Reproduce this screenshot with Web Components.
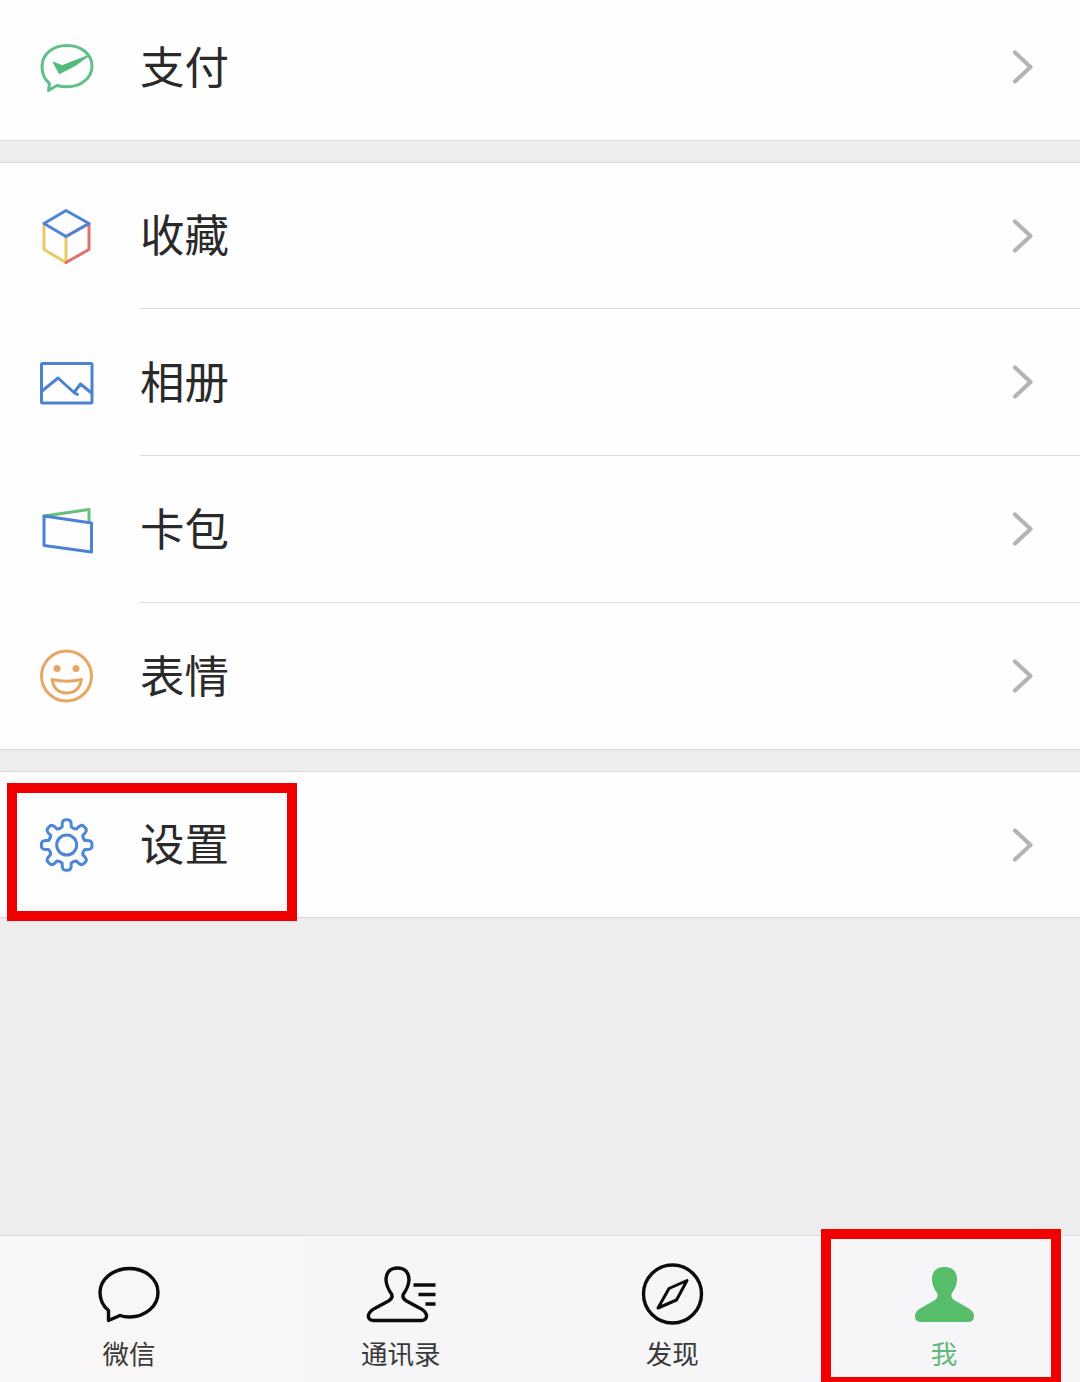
<!DOCTYPE html>
<html lang="zh-CN">
<head>
<meta charset="utf-8">
<title>我</title>
<style>
html,body{margin:0;padding:0}
body{width:1080px;height:1382px;overflow:hidden;position:relative;background:#eeedee;font-family:"Noto Sans CJK SC","Noto Sans",sans-serif;display:flex;flex-direction:column}
</style>
</head>
<body>
<template id="t-group"><style>
:host{display:block;background:#fefefe;border-top:1px solid #d9d9db;border-bottom:1px solid #d9d9db;margin-bottom:21px}
:host([first]){border-top:0;margin-top:-6px}
:host([last]){margin-bottom:0}
</style><slot></slot></template>

<template id="t-row"><style>
:host{display:flex;align-items:stretch;height:var(--h,147px);box-sizing:border-box;padding-left:33px}
.ic{width:66px;flex:none;display:flex;align-items:center;justify-content:center}
.body{flex:1;margin-left:41px;display:flex;align-items:center;justify-content:space-between;padding-right:44px;border-bottom:1px solid #dcdcdc}
:host([end]) .body{border-bottom:0}
.t{font-size:44.5px;line-height:60px;color:#2a2a2a;margin-top:-5px}
svg{display:block}
</style><div class="ic"><slot name="icon"></slot></div><div class="body"><span class="t"><slot></slot></span>
<svg width="26" height="36" viewBox="0 0 26 36" fill="none" stroke="#b4b4b4" stroke-width="4.2" stroke-linecap="round" stroke-linejoin="round"><path d="M5 3.500 L20.500 18 L5 32.500"/></svg></div></template>

<template id="t-tabbar"><style>
:host{display:grid;grid-template-columns:repeat(4,100px);column-gap:171.67px;padding-left:79px;height:147px;box-sizing:border-box;margin-top:auto;border-top:1px solid #dcdcdc;background:linear-gradient(90deg,#f8f7f5 0,#f8f7f5 305px,#f6f5f7 305px)}
</style><slot></slot></template>

<template id="t-tab"><style>
:host{display:flex;flex-direction:column;align-items:center;padding-top:26px;color:#3a3a3a}
:host([active]){color:#62b87c}
.l{font-size:26.5px;line-height:30px;margin-top:12px}
::slotted(svg){display:block}
</style><slot name="icon"></slot><span class="l"><slot></slot></span></template>

<template id="t-mark"><style>
:host{display:block;position:absolute;box-sizing:border-box;border:10.5px solid #f20000}
</style></template>

<script>
function def(name, tpl){
  customElements.define(name, class extends HTMLElement{
    constructor(){super();this.attachShadow({mode:'open'}).appendChild(document.getElementById(tpl).content.cloneNode(true));}
  });
}
def('wx-group','t-group');def('wx-row','t-row');def('wx-tabbar','t-tabbar');def('wx-tab','t-tab');def('wx-mark','t-mark');
customElements.define('wx-gear',class extends HTMLElement{
  constructor(){super();
    const cx=33.7,cy=33,ro=24.2,ri=18.2;let d='';
    const p=(r,a)=>(cx+r*Math.sin(a)).toFixed(2)+' '+(cy-r*Math.cos(a)).toFixed(2);
    for(let i=0;i<8;i++){
      const a=i*Math.PI/4;
      d+=(i?'Q '+p(ri-1,a-Math.PI/8)+' ':'M ')+p(ri+.6,a-.24)+' Q '+p(ro+2.4,a-.2)+' '+p(ro+1,a)+' Q '+p(ro+2.4,a+.2)+' '+p(ri+.6,a+.24)+' ';
    }
    d+='Q '+p(ri-1,-Math.PI/8)+' '+p(ri+.6,-.24)+' Z';
    this.attachShadow({mode:'open'}).innerHTML='<style>:host{display:block;width:66px;height:66px}svg{display:block}</style><svg width="66" height="66" viewBox="0 0 66 66" fill="none" stroke="#4d86d6" stroke-width="3" stroke-linejoin="round"><path d="'+d+'"/><circle cx="33.7" cy="33" r="10"/></svg>';
  }
});
</script>

<wx-group first>
  <wx-row end style="--h:146px">
    <svg slot="icon" width="66" height="66" viewBox="33 34 66 66" fill="none">
      <path d="M57 85.500 C54 87 51 89 48.500 90.500 L49.500 83.500 C44.500 79.500 42 74 42 66.500 C42 54 53 45.500 67 45.500 C81 45.500 92 54 92 66 C92 78 81 86.800 67 86.800 C63.500 86.800 60 86.500 57 85.500 Z" stroke="#5fc08a" stroke-width="3" stroke-linejoin="round"/>
      <path d="M53.500 62.500 L62 66 L88 56 L75 65.500 L59.500 73.500 Z" fill="#55bb78" stroke="#55bb78" stroke-width="1.400" stroke-linejoin="round"/>
    </svg>
    支付
  </wx-row>
</wx-group>

<wx-group>
  <wx-row style="--h:146px">
    <svg slot="icon" width="66" height="66" viewBox="33 202.500 66 66" fill="none" stroke-width="3" stroke-linecap="round" stroke-linejoin="round">
      <path d="M66 236 V262 L44 249 V223" stroke="#ecc865"/>
      <path d="M66 236 L89 223 V249 L66 262" stroke="#e0716f"/>
      <path d="M44 223 L66 210 L89 223 L66 236 Z" stroke="#4d86d6"/>
    </svg>
    收藏
  </wx-row>
  <wx-row>
    <svg slot="icon" width="66" height="66" viewBox="33 349 66 66" fill="none" stroke="#4d82d2" stroke-width="3" stroke-linejoin="round" stroke-linecap="round">
      <rect x="41.500" y="362.500" width="50.500" height="39.500" rx="1"/>
      <path d="M42 390 L58 377 L74 391.500 L80.500 383 L91.500 392 M74 391.500 L77.500 393.500"/>
    </svg>
    相册
  </wx-row>
  <wx-row>
    <svg slot="icon" width="66" height="66" viewBox="33 496 66 66" fill="none" stroke-width="3" stroke-linejoin="round" stroke-linecap="round">
      <path d="M44 515 L89 508.500 V520" stroke="#66c07c"/>
      <path d="M44 515 L91.500 522 V551 L44 544.500 Z" stroke="#4d82d2"/>
    </svg>
    卡包
  </wx-row>
  <wx-row end style="--h:146px">
    <svg slot="icon" width="66" height="66" viewBox="33 643 66 66" fill="none" stroke="#e6a765" stroke-width="3" stroke-linejoin="round">
      <circle cx="66.500" cy="676" r="25"/>
      <circle cx="57" cy="668.500" r="3.500" fill="#e6a765" stroke="none"/>
      <circle cx="76" cy="668.500" r="3.500" fill="#e6a765" stroke="none"/>
      <path d="M52 679.500 Q66.500 683 81.500 679.500 Q79 693 66.500 693 Q54.500 693 52 679.500 Z"/>
    </svg>
    表情
  </wx-row>
</wx-group>

<wx-group last>
  <wx-row end style="--h:145px"><wx-gear slot="icon"></wx-gear>设置</wx-row>
</wx-group>

<wx-tabbar>
  <wx-tab>
    <svg slot="icon" width="100" height="64" viewBox="79.500 1262 100 64" fill="none" stroke="#0c0c0c" stroke-width="3.400" stroke-linejoin="round">
      <path d="M120.500 1315.500 C124 1316.800 127 1317 130 1317 C146 1317 158.500 1306 158.500 1292.500 C158.500 1279 146 1268.500 130 1268.500 C114 1268.500 100.500 1279 100.500 1292.500 C100.500 1300 103.500 1306 109 1310.500 L109 1320.500 Z"/>
    </svg>
    微信
  </wx-tab>
  <wx-tab>
    <svg slot="icon" width="100" height="64" viewBox="350.500 1262 100 64" fill="none" stroke="#0c0c0c" stroke-width="3.400" stroke-linejoin="round">
      <path d="M373 1320.500 Q367 1320 368 1315 Q369 1311 375 1308 L388 1301 Q393 1298 391 1294 Q386 1287 385.500 1280 C385.500 1272 390 1268 397 1268 C404 1268 408.500 1272 408.500 1280 Q408 1287 403 1294 Q401 1298 406 1301 L419 1308 Q425 1311 426 1315 Q426.500 1320 421 1320.500 Z"/>
      <path d="M413 1285 H435 M418 1294.500 H435 M425 1304 H435"/>
    </svg>
    通讯录
  </wx-tab>
  <wx-tab>
    <svg slot="icon" width="100" height="64" viewBox="622.500 1262 100 64" fill="none" stroke="#0c0c0c" stroke-width="3.400" stroke-linejoin="round">
      <circle cx="673" cy="1294" r="29"/>
      <path d="M687.500 1280.500 L677 1300 L658.500 1308 L669.500 1288.500 Z" stroke-width="3"/>
    </svg>
    发现
  </wx-tab>
  <wx-tab active>
    <svg slot="icon" width="100" height="64" viewBox="894 1262 100 64">
      <path fill="#58bd6a" d="M921 1322 Q915 1322 915 1316 Q915 1311 921 1308 L935 1300 Q939 1297 937 1293 Q932 1286 932 1279 C932 1271 937 1267 944.500 1267 C952 1267 957 1271 957 1279 Q957 1286 952 1293 Q950 1297 954 1300 L968 1308 Q974 1311 974 1316 Q974 1322 968 1322 Z"/>
    </svg>
    我
  </wx-tab>
</wx-tabbar>

<wx-mark style="left:7px;top:783px;width:290px;height:138px"></wx-mark>
<wx-mark style="left:821px;top:1229px;width:240px;height:158px"></wx-mark>
</body>
</html>
